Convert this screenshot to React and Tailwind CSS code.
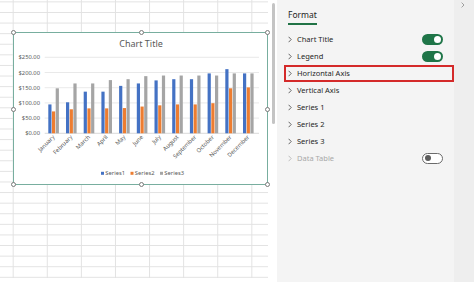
import React from "react";

const MONTHS = ["January","February","March","April","May","June","July","August","September","October","November","December"];
const S1 = [95,102,137,137,156,164,174,178,178,197,211,197];
const S2 = [72,79,82,82,83,88,92,95,95,99,148,151];
const S3 = [148,164,164,175,178,188,190,190,190,190,197,197];
const COLORS = ["#4472c4", "#ed7d31", "#a5a5a5"];

function Chart() {
  const x0 = 30.7, cw = 17.7, y0 = 100.3, sc = 76 / 250;
  const ticks = [0, 50, 100, 150, 200, 250];
  const font = "'Noto Sans', 'Open Sans', sans-serif";
  return (
    <svg width="253" height="151" viewBox="0 0 253 151" className="block">
      <text x="127" y="14" textAnchor="middle" fontSize="9" fill="#595959" fontFamily={font}>Chart Title</text>
      {ticks.map((t) => {
        const y = y0 - t * sc;
        return (
          <g key={t}>
            <line x1={x0} x2="245" y1={y} y2={y} stroke={t === 0 ? "#d0d0d0" : "#e3e3e3"} strokeWidth="0.8" />
            <text x="26" y={y + 2} textAnchor="end" fontSize="5.8" fill="#595959" fontFamily={font}>${t}.00</text>
          </g>
        );
      })}
      {MONTHS.map((m, i) => {
        const cx = x0 + cw * i;
        const vals = [S1[i], S2[i], S3[i]];
        return (
          <g key={m}>
            {vals.map((v, j) => (
              <rect key={j} x={cx + 3.6 + j * 3.7} y={y0 - v * sc} width="3.2" height={v * sc} fill={COLORS[j]} />
            ))}
            <text
              x={cx + cw / 2 + 1.5}
              y="104.5"
              textAnchor="end"
              fontSize="5.8"
              fill="#595959"
              fontFamily={font}
              transform={`rotate(-45 ${cx + cw / 2 + 1.5} 104.5)`}
            >
              {m}
            </text>
          </g>
        );
      })}
      {["Series1", "Series2", "Series3"].map((s, j) => {
        const lx = 87 + j * 29.5;
        return (
          <g key={s}>
            <rect x={lx} y="138.8" width="3" height="3" fill={COLORS[j]} />
            <text x={lx + 4.3} y="142.4" fontSize="5.8" fill="#595959" fontFamily={font}>{s}</text>
          </g>
        );
      })}
    </svg>
  );
}

function Handle({ className }) {
  return <div className={`absolute w-[5px] h-[5px] rounded-full bg-white border border-[#7a7a7a] ${className}`} />;
}

function Chevron({ color = "#424242" }) {
  return (
    <svg width="4" height="7" viewBox="0 0 4 7" className="shrink-0">
      <polyline points="0.6,0.8 3.2,3.5 0.6,6.2" fill="none" stroke={color} strokeWidth="0.8" />
    </svg>
  );
}

function ToggleOn() {
  return (
    <div className="w-[21px] h-[11px] rounded-full bg-[#1f7548] flex items-center justify-end pr-[2px]">
      <div className="w-[7px] h-[7px] rounded-full bg-white" />
    </div>
  );
}

function ToggleOff() {
  return (
    <div className="w-[21px] h-[11px] rounded-full bg-white border border-[#6b6b6b] flex items-center pl-[1.5px]">
      <div className="w-[6px] h-[6px] rounded-full bg-[#5c5c5c]" />
    </div>
  );
}

function Row({ label, toggle, muted, highlight }) {
  return (
    <div className="relative h-[17px] flex items-center">
      <Chevron color={muted ? "#b0b0b0" : "#424242"} />
      <span className={`ml-[5px] text-[7.5px] leading-[10px] ${muted ? "text-[#a8a8a8]" : "text-[#262626]"}`}>{label}</span>
      <div className="ml-auto">{toggle === "on" ? <ToggleOn /> : toggle === "off" ? <ToggleOff /> : null}</div>
      {highlight && <div className="absolute top-0 bottom-0 -left-[4px] -right-[11px] border-2 border-[#d42a2a]" />}
    </div>
  );
}

export default function App() {
  return (
    <div className="flex w-[474px] h-[282px] bg-white overflow-hidden font-['Noto_Sans','Open_Sans',sans-serif]">
      <div className="relative w-[268px] h-[278px] shrink-0 bg-white bg-[linear-gradient(to_right,#e2e2e2_1px,transparent_1px),linear-gradient(to_bottom,#e2e2e2_1px,transparent_1px)] bg-[size:34.1px_100%,100%_10.6px] bg-[position:12.7px_0,0_1.4px]">
        <div className="absolute left-[13px] top-[32px] w-[255px] h-[153px] border border-[#78ae9f] bg-white">
          <Chart />
          <Handle className="-left-[3px] -top-[3px]" />
          <Handle className="left-[124.5px] -top-[3px]" />
          <Handle className="-right-[3px] -top-[3px]" />
          <Handle className="-left-[3px] top-[73.5px]" />
          <Handle className="-right-[3px] top-[73.5px]" />
          <Handle className="-left-[3px] -bottom-[3px]" />
          <Handle className="left-[124.5px] -bottom-[3px]" />
          <Handle className="-right-[3px] -bottom-[3px]" />
        </div>
      </div>
      <div className="w-[9px] shrink-0 h-full bg-white pt-[3px] pl-[4px]">
        <div className="w-[3px] h-[121px] rounded-full bg-[#c4c4c4]" />
      </div>
      <div className="w-[177px] shrink-0 h-full bg-[#f4f4f4] px-[11px] pt-[9px] flex flex-col">
        <div className="self-start">
          <div className="text-[8.5px] leading-[12px] text-[#242424]">Format</div>
          <div className="mt-[1.5px] h-[2px] w-[29px] bg-[#217346]" />
        </div>
        <div className="mt-[6px] flex flex-col">
          <Row label="Chart Title" toggle="on" />
          <Row label="Legend" toggle="on" />
          <Row label="Horizontal Axis" highlight />
          <Row label="Vertical Axis" />
          <Row label="Series 1" />
          <Row label="Series 2" />
          <Row label="Series 3" />
          <Row label="Data Table" toggle="off" muted />
        </div>
      </div>
      <div className="w-[20px] shrink-0 h-full bg-[#eeeeee] pl-[7px] pt-[2px]">
        <svg width="4" height="6" viewBox="0 0 4 6">
          <polyline points="0.6,0.6 3,3 0.6,5.4" fill="none" stroke="#8a8a8a" strokeWidth="0.8" />
        </svg>
      </div>
    </div>
  );
}
